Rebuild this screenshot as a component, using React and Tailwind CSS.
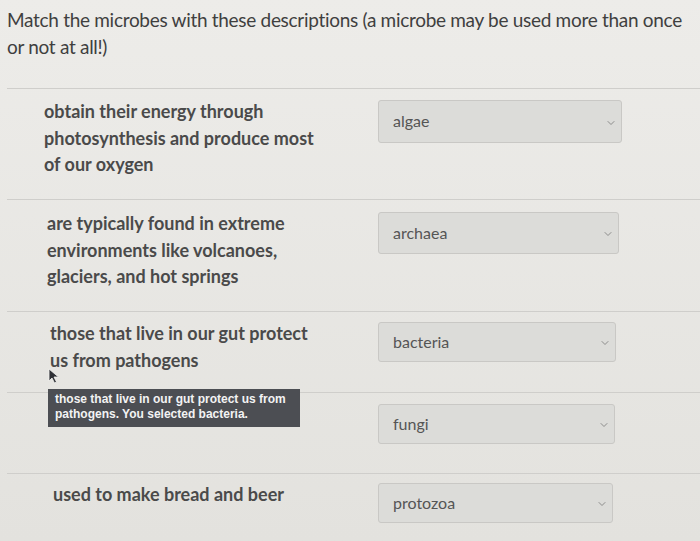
import { ChevronDown } from 'lucide-react';

const rows = [
  {
    lines: 'obtain their energy through photosynthesis and produce most of our oxygen',
    value: 'algae',
    h: 'h-[110px]',
    pl: 'pl-[37px]',
    pt: 'pt-[9px]',
    sel: 'mt-[11px] w-[244px] h-[43px]',
  },
  {
    lines: 'are typically found in extreme environments like volcanoes, glaciers, and hot springs',
    value: 'archaea',
    h: 'h-[112px]',
    pl: 'pl-[40px]',
    pt: 'pt-[10px]',
    sel: 'mt-[12px] w-[241px] h-[42px]',
  },
  {
    lines: 'those that live in our gut protect us from pathogens',
    value: 'bacteria',
    h: 'h-[81px]',
    pl: 'pl-[43px]',
    pt: 'pt-[8px]',
    sel: 'mt-[10px] w-[238px] h-[40px]',
    cursor: true,
  },
  {
    lines: '',
    value: 'fungi',
    h: 'h-[81px]',
    pl: 'pl-[41px]',
    pt: 'pt-[0px]',
    sel: 'mt-[11px] w-[237px] h-[40px]',
    tooltip: true,
  },
  {
    lines: 'used to make bread and beer',
    value: 'protozoa',
    h: 'h-[69px]',
    pl: 'pl-[46px]',
    pt: 'pt-[7px]',
    sel: 'mt-[9px] w-[235px] h-[40px]',
  },
];

function Cursor() {
  return (
    <svg width="14" height="16" viewBox="0 0 14 16" className="absolute left-[40px] top-[56px]">
      <path d="M2 1 L2 13 L5 10 L7.5 15 L9.5 14 L7 9 L11.5 9 Z" fill="#2f3136" stroke="#f2f2f0" strokeWidth="0.8" />
    </svg>
  );
}

export default function App() {
  return (
    <div className="w-[700px] h-[541px] overflow-hidden bg-gradient-to-b from-[#edece9] to-[#e3e2de] font-['Lato','Noto_Sans',sans-serif] text-[#3f3f3f]">
      <div className="pl-[7px] pt-[6px] pr-[8px] text-[19px] leading-[27px] tracking-[-0.3px]">
        Match the microbes with these descriptions (a microbe may be used more than once or not at all!)
      </div>

      <div className="mt-[28px] ml-[7px] border-t border-[#cfcecb]">
        {rows.map((r, i) => (
          <div
            key={i}
            className={`relative flex ${r.h} ${i > 0 ? 'border-t border-[#cfcecb]' : ''}`}
          >
            <div className={`w-[371px] ${r.pl} ${r.pt} pr-[55px] text-[18px] leading-[26.5px] font-bold text-[#4a4a4a]`}>
              {r.lines}
            </div>
            <div>
              <div
                className={`${r.sel} flex items-center justify-between pl-[14px] pr-[4px] rounded-[3px] bg-[#dcdcd9] border border-[#c9c8c5] text-[16px] text-[#555]`}
              >
                <span className="-mt-[1px]">{r.value}</span>
                <ChevronDown size={12} strokeWidth={1.6} className="text-[#777] mt-[2px]" />
              </div>
            </div>
            {r.cursor && <Cursor />}
            {r.tooltip && (
              <div className="absolute left-[41px] -top-[4px] w-[252px] bg-[#4c4e53] px-[7px] pt-[3px] pb-[5px] text-[12px] leading-[15px] font-bold text-[#f3f3f3] font-['Liberation_Sans',Arial,sans-serif]">
                those that live in our gut protect us from pathogens. You selected bacteria.
              </div>
            )}
          </div>
        ))}
      </div>
    </div>
  );
}
